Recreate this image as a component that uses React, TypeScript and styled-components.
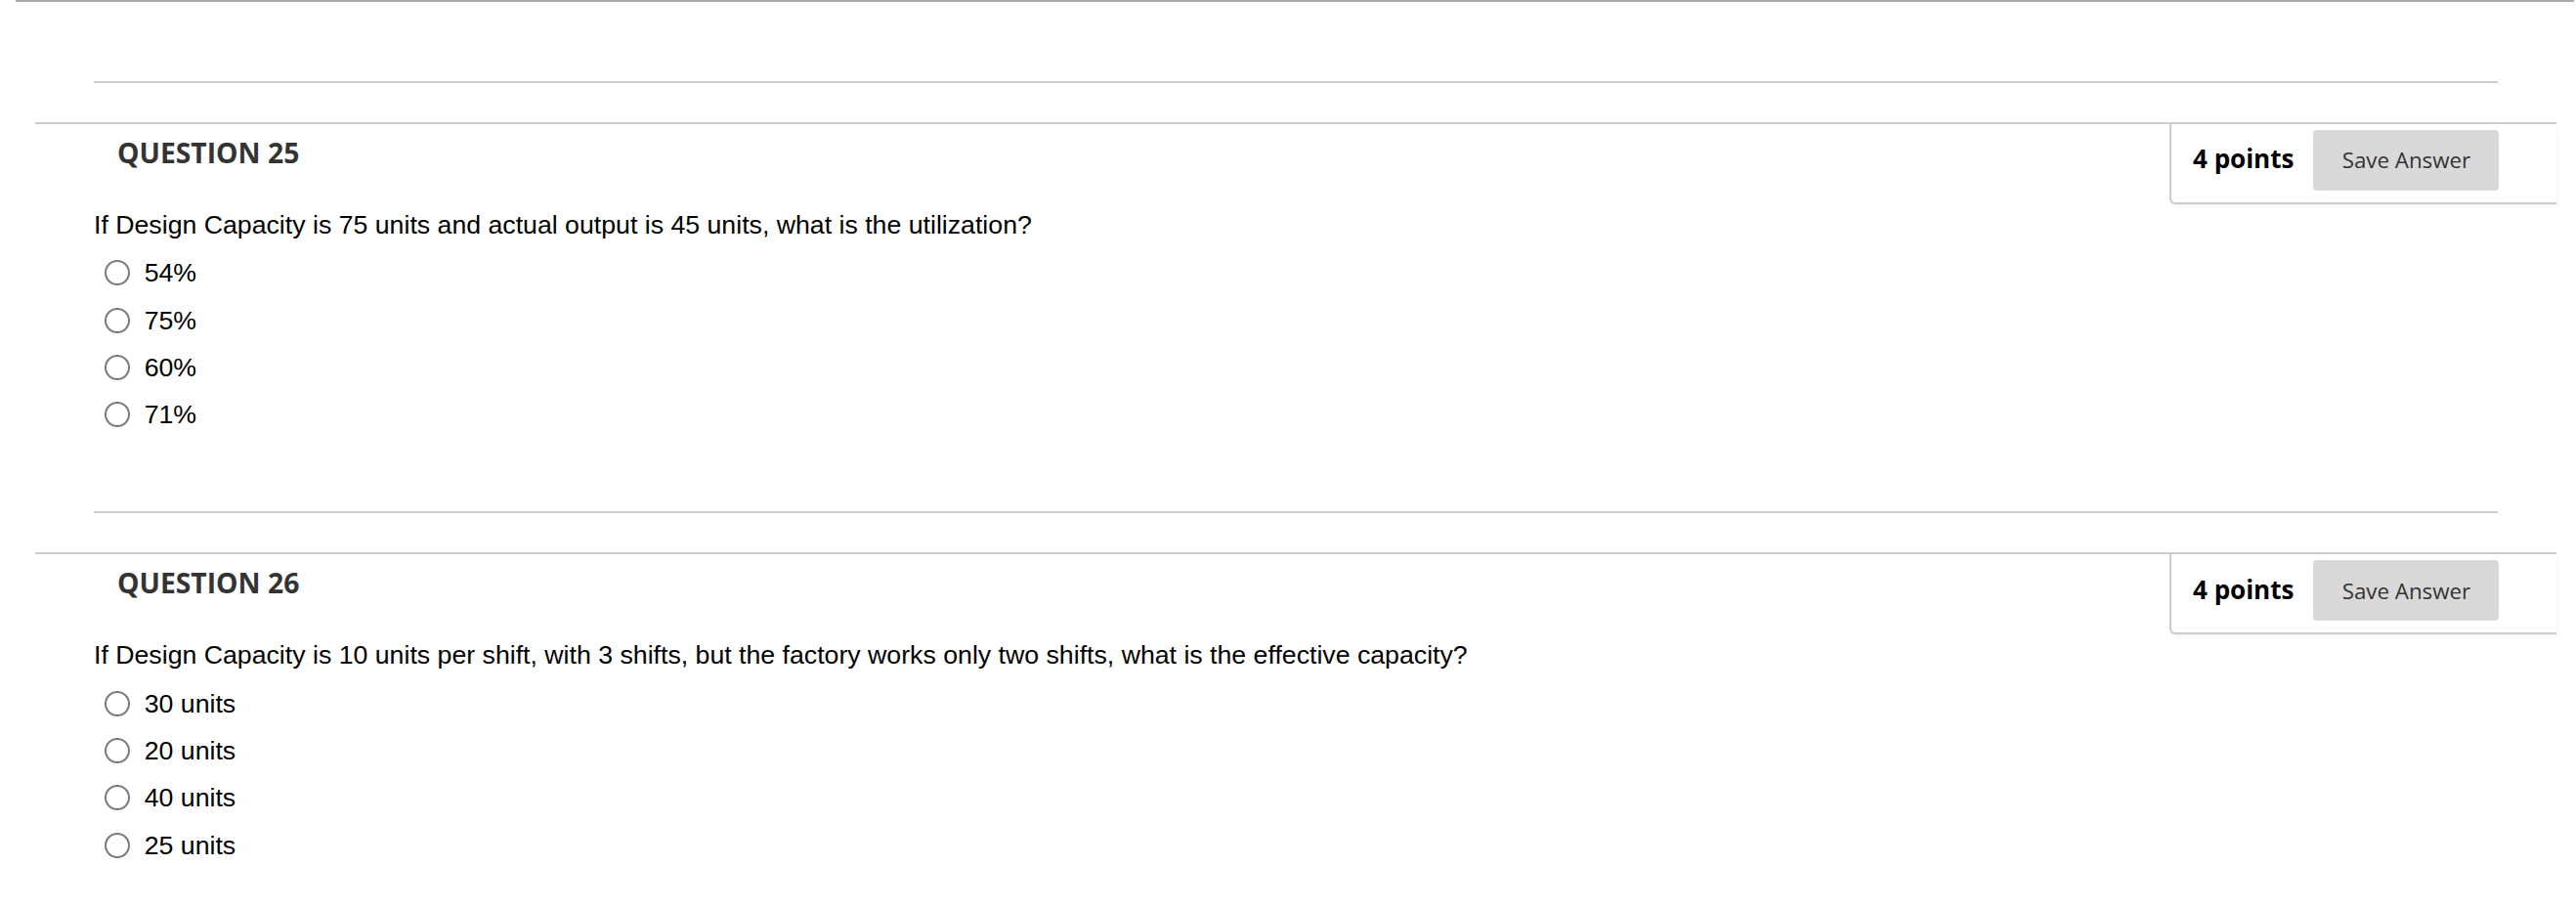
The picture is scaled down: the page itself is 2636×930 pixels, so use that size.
import styled, { createGlobalStyle } from "styled-components"

interface Question {
    number: number
    points: number
    text: string
    answers: string[]
}

const questions: Question[] = [
    {
        number: 25,
        points: 4,
        text: "If Design Capacity is 75 units and actual output is 45 units, what is the utilization?",
        answers: ["54%", "75%", "60%", "71%"],
    },
    {
        number: 26,
        points: 4,
        text: "If Design Capacity is 10 units per shift, with 3 shifts, but the factory works only two shifts, what is the effective capacity?",
        answers: ["30 units", "20 units", "40 units", "25 units"],
    },
]

const GlobalStyle = createGlobalStyle`
    html, body {
        margin: 0;
        padding: 0;
        background: #fff;
    }
    body {
        font-family: "Liberation Sans", Arial, sans-serif;
        width: 2636px;
        height: 930px;
        overflow: hidden;
    }
`

export default function App() {
    return <>
        <GlobalStyle />
        <Page>
            <TopFrame />
            <QuestionList>
                {questions.map((q) => (
                    <QuestionBlock key={`question-${q.number}`}>
                        <Separator />
                        <QuestionHeader>
                            <QuestionTitle>QUESTION {q.number}</QuestionTitle>
                            <PointsBox>
                                <Points>{q.points} points</Points>
                                <SaveButton type="button">Save Answer</SaveButton>
                            </PointsBox>
                        </QuestionHeader>
                        <QuestionBody>
                            <QuestionText>{q.text}</QuestionText>
                            <AnswerList>
                                {q.answers.map((answer, index) => (
                                    <AnswerRow key={`answer-${q.number}-${index}`}>
                                        <Radio />
                                        <AnswerLabel>{answer}</AnswerLabel>
                                    </AnswerRow>
                                ))}
                            </AnswerList>
                        </QuestionBody>
                    </QuestionBlock>
                ))}
            </QuestionList>
        </Page>
    </>
}

const Page = styled.div`
    display: flex;
    flex-direction: column;
    width: 2636px;
`

const TopFrame = styled.div`
    height: 0;
    margin: 0 2px 0 16px;
    border: 2px solid #a9a9a9;
    border-top: none;
`

const QuestionList = styled.div`
    display: flex;
    flex-direction: column;
    padding-top: 6px;
`

const QuestionBlock = styled.div`
    display: flex;
    flex-direction: column;
`

const Separator = styled.div`
    height: 2px;
    margin: 74.7px 80px 0 96px;
    background: #cccccc;
`

const QuestionHeader = styled.div`
    display: flex;
    justify-content: space-between;
    align-items: flex-start;
    margin: 40.3px 20px 0 36px;
    border-top: 2px solid #cccccc;
`

const QuestionTitle = styled.h3`
    margin: 10px 0 0 84px;
    font-family: "Open Sans", sans-serif;
    font-weight: 700;
    font-size: 28.3px;
    line-height: 38px;
    color: #333333;
`

const PointsBox = styled.div`
    display: flex;
    align-items: center;
    gap: 20px;
    width: 396px;
    box-sizing: border-box;
    padding: 6px 0 12px 22px;
    border-left: 2px solid #cccccc;
    border-bottom: 2px solid #cccccc;
    border-bottom-left-radius: 6px;
    background: #ffffff;
    box-shadow: 1px 2px 4px rgba(0, 0, 0, 0.05);
`

const Points = styled.span`
    margin-bottom: 3px;
    font-family: "Open Sans", sans-serif;
    font-weight: 700;
    font-size: 26px;
    color: #000;
    white-space: nowrap;
`

const SaveButton = styled.button`
    width: 190px;
    height: 62px;
    border: none;
    border-radius: 4px;
    background: #d9d9d9;
    font-family: "Open Sans", sans-serif;
    font-size: 22.3px;
    color: #333333;
    padding: 0;
`

const QuestionBody = styled.div`
    display: flex;
    flex-direction: column;
    margin-left: 96px;
`

const QuestionText = styled.div`
    margin-top: 6px;
    font-size: 26.7px;
    line-height: 30px;
    color: #000;
`

const AnswerList = styled.div`
    display: flex;
    flex-direction: column;
    margin-top: 10.2px;
`

const AnswerRow = styled.label`
    display: flex;
    align-items: center;
    height: 48.33px;
    padding-left: 11px;
`

const Radio = styled.span`
    width: 26px;
    height: 26px;
    box-sizing: border-box;
    border: 2px solid #7a7a7a;
    border-radius: 50%;
    background: #fff;
    flex-shrink: 0;
`

const AnswerLabel = styled.span`
    margin-left: 14.7px;
    font-size: 26.7px;
    line-height: 30px;
    color: #000;
`
